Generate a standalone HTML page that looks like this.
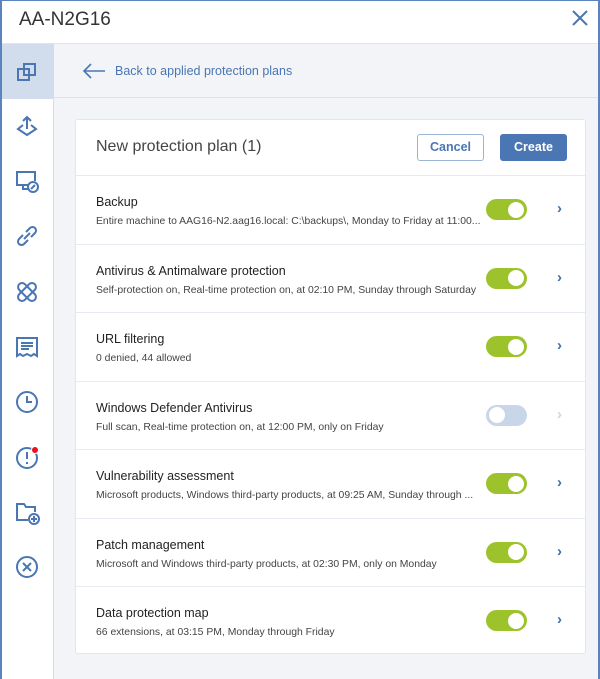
<!DOCTYPE html>
<html><head><meta charset="utf-8"><style>
*{margin:0;padding:0;box-sizing:border-box}
body{width:600px;height:679px;overflow:hidden;font-family:"Liberation Sans",sans-serif;background:#fff;position:relative}
.frame{position:absolute;left:0;top:0;width:600px;height:679px;border-left:2px solid #5b83bd;border-right:2px solid #5b83bd;border-top:1px solid #5b83bd}
.hdr{position:absolute;left:2px;top:1px;width:596px;height:43px;background:#fff;border-bottom:1px solid #dfe5ee}
.hdr h1{position:absolute;left:17px;top:8px;font-weight:normal;font-size:19px;color:#333}
.side{position:absolute;left:2px;top:44px;width:52px;height:635px;background:#fff;border-right:1px solid #d4dce8}
.side .act{position:absolute;left:0;top:0;width:51px;height:55px;background:#d1dcec}
.side svg{position:absolute;left:13px}
.main{position:absolute;left:54px;top:44px;width:544px;height:635px;background:#f3f4f7}
.back{position:absolute;left:0;top:0;width:544px;height:54px;border-bottom:1px solid #dbe2ec}
.back span{position:absolute;left:61px;top:20px;font-size:12.5px;color:#4a76b3}
.card{position:absolute;left:21px;top:75px;width:511px;height:535px;background:#fff;border:1px solid #e2e7ef;border-radius:3px}
.ch{height:56px;border-bottom:1px solid #e6ebf2;position:relative}
.ch .t{position:absolute;left:20px;top:18px;font-size:16px;color:#444}
.btn{position:absolute;top:14px;height:27px;border-radius:3px;font-size:12.5px;font-weight:bold;text-align:center;line-height:25px}
.cancel{left:341px;width:67px;border:1px solid #9cb4d6;color:#4a76b3;background:#fff}
.create{left:424px;width:67px;background:#4a76b3;color:#fff;border:1px solid #4a76b3}
.row{height:68.5px;border-bottom:1px solid #e6ebf2;position:relative}
.row:last-child{border-bottom:none}
.row .a{position:absolute;left:20px;top:19px;font-size:12.5px;color:#222}
.row .b{position:absolute;left:20px;top:40px;font-size:10.4px;color:#444;white-space:nowrap}
.tg{position:absolute;left:410px;top:23px;width:41px;height:21px;border-radius:11px;background:#9cc22c}
.tg::after{content:"";position:absolute;right:3px;top:2.5px;width:16px;height:16px;border-radius:50%;background:#fff}
.tg.off{background:#c9d6ea}
.tg.off::after{left:3px;right:auto}
.chev{position:absolute;left:481px;top:24px;font-size:15px;color:#3d6fb3;font-weight:bold}
.chev.off{color:#c9d6ea}
</style></head><body>
<div class="hdr"><h1>AA-N2G16</h1>
<svg style="position:absolute;left:569px;top:8px" width="18" height="18" viewBox="0 0 18 18"><path d="M2 2L16 16M16 2L2 16" stroke="#4a76b3" stroke-width="2"/></svg></div>
<div class="side"><div class="act"></div>
<svg style="top:16px" width="24" height="24" viewBox="0 0 24 24" fill="none" stroke="#4a76b3" stroke-width="2"><rect x="3" y="9" width="11" height="11"/><rect x="9" y="4" width="11" height="11"/></svg>
<svg style="top:70px" width="24" height="24" viewBox="0 0 24 24" fill="none" stroke="#4a76b3" stroke-width="2"><path d="M12 15V3M8 7l4-4 4 4M8 11L3 15l9 6 9-6-5-4"/></svg>
<svg style="top:124px" width="26" height="26" viewBox="0 0 26 26" fill="none" stroke="#4a76b3" stroke-width="2"><path d="M14 17H2V4h18v9M8 17v4h6"/><circle cx="18" cy="19" r="5"/><path d="M16 21l4-4"/></svg>
<svg style="top:180px" width="24" height="24" viewBox="0 0 24 24" fill="none" stroke="#4a76b3" stroke-width="2"><path d="M9 15l6-6M8 11l-4 4a3.5 3.5 0 005 5l4-4M16 13l4-4a3.5 3.5 0 00-5-5l-4 4"/></svg>
<svg style="top:236px" width="24" height="24" viewBox="0 0 24 24" fill="none" stroke="#4a76b3" stroke-width="2"><rect x="1" y="8" width="22" height="8" rx="4" transform="rotate(45 12 12)"/><rect x="1" y="8" width="22" height="8" rx="4" transform="rotate(-45 12 12)"/></svg>
<svg style="top:291px" width="24" height="24" viewBox="0 0 24 24" fill="none" stroke="#4a76b3" stroke-width="2"><path d="M2 3h20v18l-3-2-3 2-4-2-4 2-3-2-3 2z"/><path d="M6 8h12M6 11h12M6 14h8"/></svg>
<svg style="top:346px" width="24" height="24" viewBox="0 0 24 24" fill="none" stroke="#4a76b3" stroke-width="2"><circle cx="12" cy="12" r="10"/><path d="M12 6v6h5"/></svg>
<svg style="top:400px" width="26" height="26" viewBox="0 0 26 26" fill="none" stroke="#4a76b3" stroke-width="2"><circle cx="12" cy="14" r="10"/><path d="M12 8v7M12 18v2"/><circle cx="20" cy="6" r="3.5" fill="#e8141d" stroke="#fff" stroke-width="1"/></svg>
<svg style="top:456px" width="26" height="26" viewBox="0 0 26 26" fill="none" stroke="#4a76b3" stroke-width="2"><path d="M13 20H2V4h7l2 3h9v5"/><circle cx="19" cy="19" r="5"/><path d="M19 16v6M16 19h6"/></svg>
<svg style="top:511px" width="24" height="24" viewBox="0 0 24 24" fill="none" stroke="#4a76b3" stroke-width="2"><circle cx="12" cy="12" r="10"/><path d="M8 8l8 8M16 8l-8 8"/></svg>
</div>
<div class="main">
<div class="back"><svg style="position:absolute;left:28px;top:19px" width="24" height="16" viewBox="0 0 24 16" fill="none" stroke="#4a76b3" stroke-width="1.6"><path d="M23 8H2M9 1L2 8l7 7"/></svg><span>Back to applied protection plans</span></div>
<div class="card">
<div class="ch"><span class="t">New protection plan (1)</span><div class="btn cancel">Cancel</div><div class="btn create">Create</div></div>
<div class="row"><div class="a">Backup</div><div class="b">Entire machine to AAG16-N2.aag16.local: C:\backups\, Monday to Friday at 11:00...</div><div class="tg"></div><div class="chev">›</div></div>
<div class="row"><div class="a">Antivirus &amp; Antimalware protection</div><div class="b">Self-protection on, Real-time protection on, at 02:10 PM, Sunday through Saturday</div><div class="tg"></div><div class="chev">›</div></div>
<div class="row"><div class="a">URL filtering</div><div class="b">0 denied, 44 allowed</div><div class="tg"></div><div class="chev">›</div></div>
<div class="row"><div class="a">Windows Defender Antivirus</div><div class="b">Full scan, Real-time protection on, at 12:00 PM, only on Friday</div><div class="tg off"></div><div class="chev off">›</div></div>
<div class="row"><div class="a">Vulnerability assessment</div><div class="b">Microsoft products, Windows third-party products, at 09:25 AM, Sunday through ...</div><div class="tg"></div><div class="chev">›</div></div>
<div class="row"><div class="a">Patch management</div><div class="b">Microsoft and Windows third-party products, at 02:30 PM, only on Monday</div><div class="tg"></div><div class="chev">›</div></div>
<div class="row"><div class="a">Data protection map</div><div class="b">66 extensions, at 03:15 PM, Monday through Friday</div><div class="tg"></div><div class="chev">›</div></div>
</div>
</div>
<div class="frame"></div>
</body></html>
